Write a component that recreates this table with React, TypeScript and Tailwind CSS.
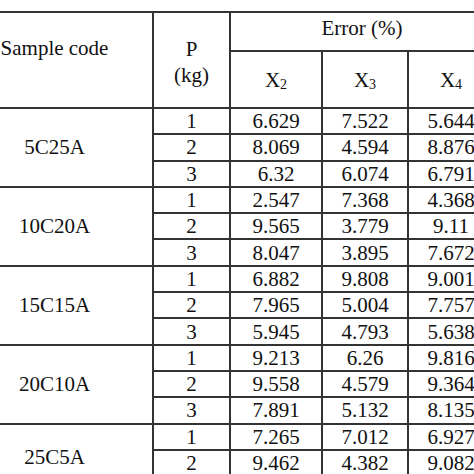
import React from "react";

type Group = { code: string; rows: [string, string, string][] };

const groups: Group[] = [
  { code: "5C25A", rows: [["6.629", "7.522", "5.644"], ["8.069", "4.594", "8.876"], ["6.32", "6.074", "6.791"]] },
  { code: "10C20A", rows: [["2.547", "7.368", "4.368"], ["9.565", "3.779", "9.11"], ["8.047", "3.895", "7.672"]] },
  { code: "15C15A", rows: [["6.882", "9.808", "9.001"], ["7.965", "5.004", "7.757"], ["5.945", "4.793", "5.638"]] },
  { code: "20C10A", rows: [["9.213", "6.26", "9.816"], ["9.558", "4.579", "9.364"], ["7.891", "5.132", "8.135"]] },
  { code: "25C5A", rows: [["7.265", "7.012", "6.927"], ["9.462", "4.382", "9.082"], ["8.114", "5.273", "7.903"]] },
];

const cell = "border-2 border-[#333] text-center align-middle p-0";

function Xsub({ n }: { n: string }) {
  return (
    <span>
      X<sub className="text-[14px] relative top-[2px]">{n}</sub>
    </span>
  );
}

export default function App() {
  return (
    <div className="w-[474px] h-[474px] overflow-hidden bg-white">
      <table
        className="table-fixed border-collapse w-[537px] ml-[-43px] mt-[11px] text-[21px] leading-[22px] text-[#111]"
        style={{ fontFamily: '"Liberation Serif", "Times New Roman", serif' }}
      >
        <colgroup>
          <col className="w-[196px]" />
          <col className="w-[77px]" />
          <col className="w-[92px]" />
          <col className="w-[86px]" />
          <col className="w-[86px]" />
        </colgroup>
        <thead>
          <tr className="h-[39px]">
            <th rowSpan={2} className={`${cell} font-normal border-l-0 pb-[24px]`}>
              Sample code
            </th>
            <th rowSpan={2} className={`${cell} font-normal leading-[26px] pt-[4px]`}>
              P
              <br />
              (kg)
            </th>
            <th colSpan={3} className={`${cell} font-normal pb-[8px]`}>
              Error (%)
            </th>
          </tr>
          <tr className="h-[57px]">
            <th className={`${cell} font-normal`}>
              <Xsub n="2" />
            </th>
            <th className={`${cell} font-normal`}>
              <Xsub n="3" />
            </th>
            <th className={`${cell} font-normal`}>
              <Xsub n="4" />
            </th>
          </tr>
        </thead>
        <tbody>
          {groups.map((g, gi) =>
            g.rows.map((r, i) => (
              <tr key={g.code + i} className="h-[26.3px]">
                {i === 0 && (
                  <td
                    rowSpan={3}
                    className={`${cell} border-l-0 ${gi === groups.length - 1 ? "pb-[12px]" : ""}`}
                  >
                    {g.code}
                  </td>
                )}
                <td className={cell}>{i + 1}</td>
                {r.map((v, j) => (
                  <td key={j} className={cell}>
                    {v}
                  </td>
                ))}
              </tr>
            ))
          )}
        </tbody>
      </table>
    </div>
  );
}
